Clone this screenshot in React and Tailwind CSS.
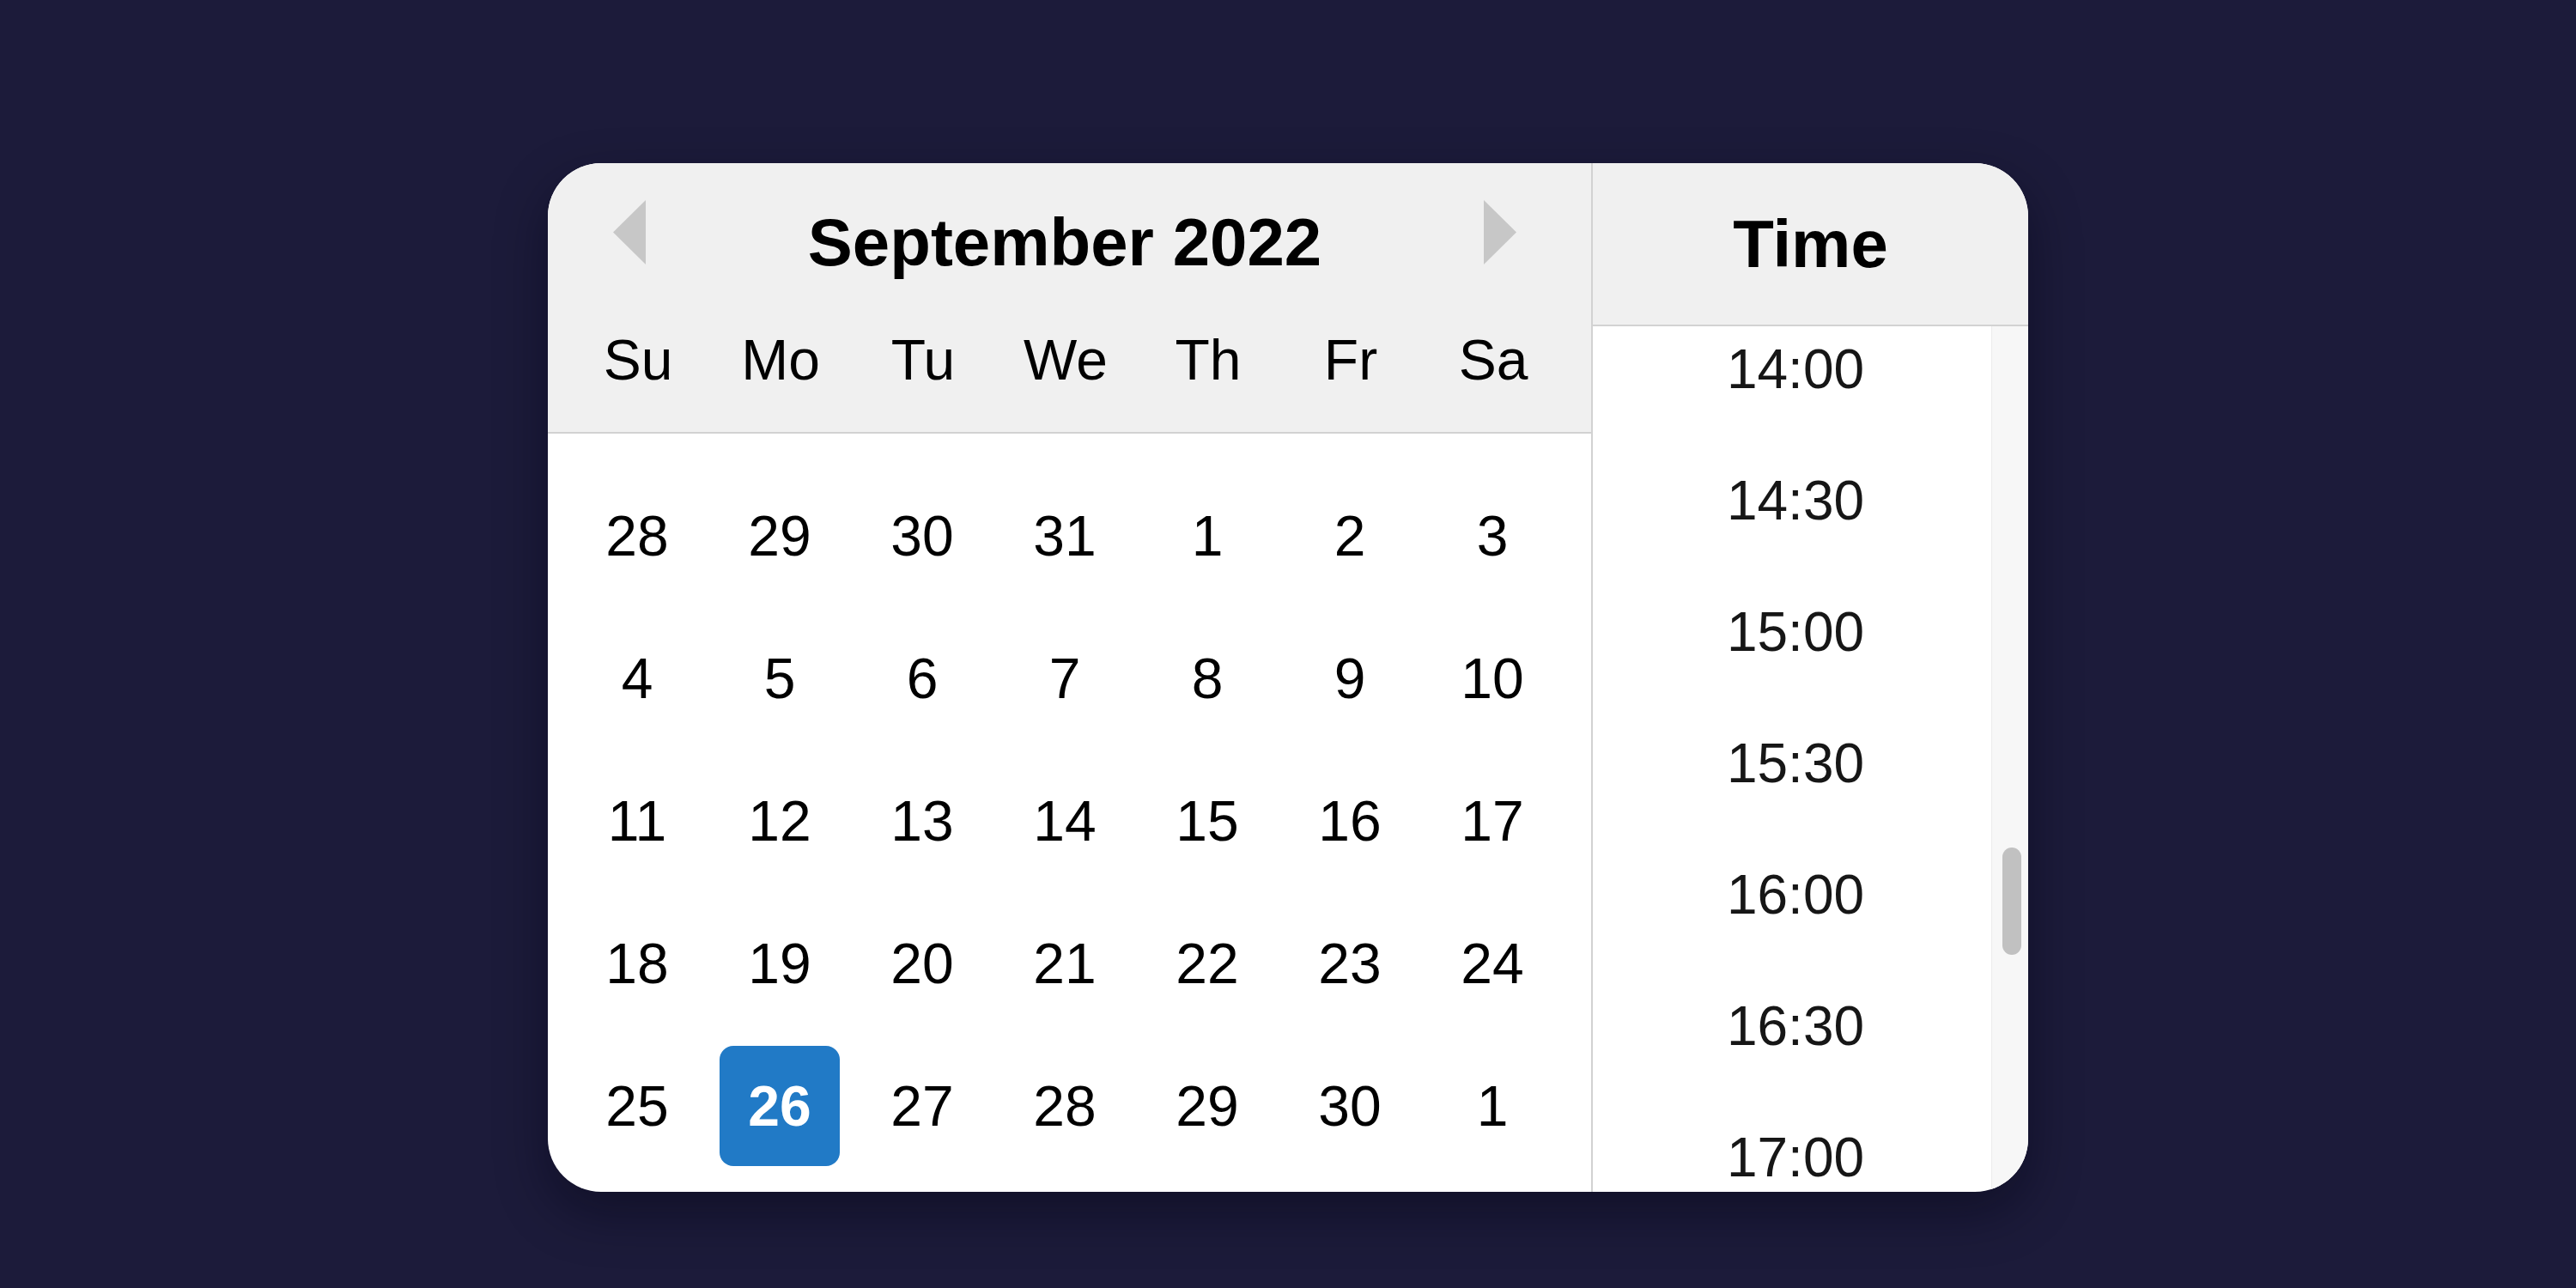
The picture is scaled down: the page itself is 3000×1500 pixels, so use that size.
const weekDays = ['Su', 'Mo', 'Tu', 'We', 'Th', 'Fr', 'Sa'];

const weeks = [
  [28, 29, 30, 31, 1, 2, 3],
  [4, 5, 6, 7, 8, 9, 10],
  [11, 12, 13, 14, 15, 16, 17],
  [18, 19, 20, 21, 22, 23, 24],
  [25, 26, 27, 28, 29, 30, 1],
];

const times = ['14:00', '14:30', '15:00', '15:30', '16:00', '16:30', '17:00'];

function Arrow({ dir }) {
  return (
    <svg width="38" height="75" viewBox="0 0 38 75" className="mb-[23px] shrink-0">
      {dir === 'left' ? (
        <polygon points="38,0 38,75 0,37.5" fill="#c7c7c7" />
      ) : (
        <polygon points="0,0 0,75 38,37.5" fill="#c7c7c7" />
      )}
    </svg>
  );
}

export default function App() {
  return (
    <div
      className="min-h-[1500px] w-full bg-[#1c1b3a] flex justify-center pt-[190px]"
      style={{ fontFamily: '"Liberation Sans", Arial, Helvetica, sans-serif' }}
    >
      <div className="w-[1724px] h-[1198px] bg-white rounded-[62px] overflow-hidden flex shadow-[0_24px_60px_rgba(5,5,20,0.45)]">
        {/* calendar */}
        <div className="w-[1217px] shrink-0 border-r-2 border-[#d2d2d2] flex flex-col">
          <div className="bg-[#f0f0f0] border-b-2 border-[#d2d2d2] pt-[53px] pb-[51px]">
            <div className="h-[78px] flex items-center pl-[76px] pr-[87px]">
              <Arrow dir="left" />
              <div className="flex-1 text-center text-[78px] leading-none font-bold text-black">
                September 2022
              </div>
              <Arrow dir="right" />
            </div>
            <div className="mt-[65px] pl-[22px] grid grid-cols-[repeat(7,166px)]">
              {weekDays.map((d) => (
                <div key={d} className="h-[66px] text-center text-[66px] leading-none text-black">
                  {d}
                </div>
              ))}
            </div>
          </div>

          <div className="pt-[36px] pl-[21px]">
            {weeks.map((week, i) => (
              <div key={i} className="grid grid-cols-[repeat(7,166px)]">
                {week.map((day, j) => {
                  const selected = i === 4 && day === 26;
                  return (
                    <div key={j} className="h-[166px] flex items-center justify-center">
                      <div
                        className={
                          selected
                            ? 'w-[140px] h-[140px] rounded-[16px] bg-[#217ac6] text-white font-bold flex items-center justify-center text-[66px] leading-none'
                            : 'w-[140px] h-[140px] flex items-center justify-center text-[66px] leading-none text-black'
                        }
                      >
                        {day}
                      </div>
                    </div>
                  );
                })}
              </div>
            ))}
          </div>
        </div>

        {/* time */}
        <div className="flex-1 flex flex-col">
          <div className="h-[190px] shrink-0 bg-[#f0f0f0] border-b-2 border-[#d2d2d2] flex items-center justify-center">
            <span className="text-[78px] leading-none font-bold text-black">Time</span>
          </div>
          <div className="flex-1 flex overflow-hidden">
            <div className="flex-1 overflow-hidden">
              <ul className="-mt-[27px] pl-[8px]">
                {times.map((t) => (
                  <li
                    key={t}
                    className="h-[153px] flex items-center justify-center text-[64px] leading-none text-[#161616]"
                  >
                    {t}
                  </li>
                ))}
              </ul>
            </div>
            <div className="w-[43px] shrink-0 bg-[#f7f7f7] border-l border-[#ececec] pt-[607px] pl-[12px]">
              <div className="w-[22px] h-[125px] rounded-full bg-[#c1c1c1]" />
            </div>
          </div>
        </div>
      </div>
    </div>
  );
}
